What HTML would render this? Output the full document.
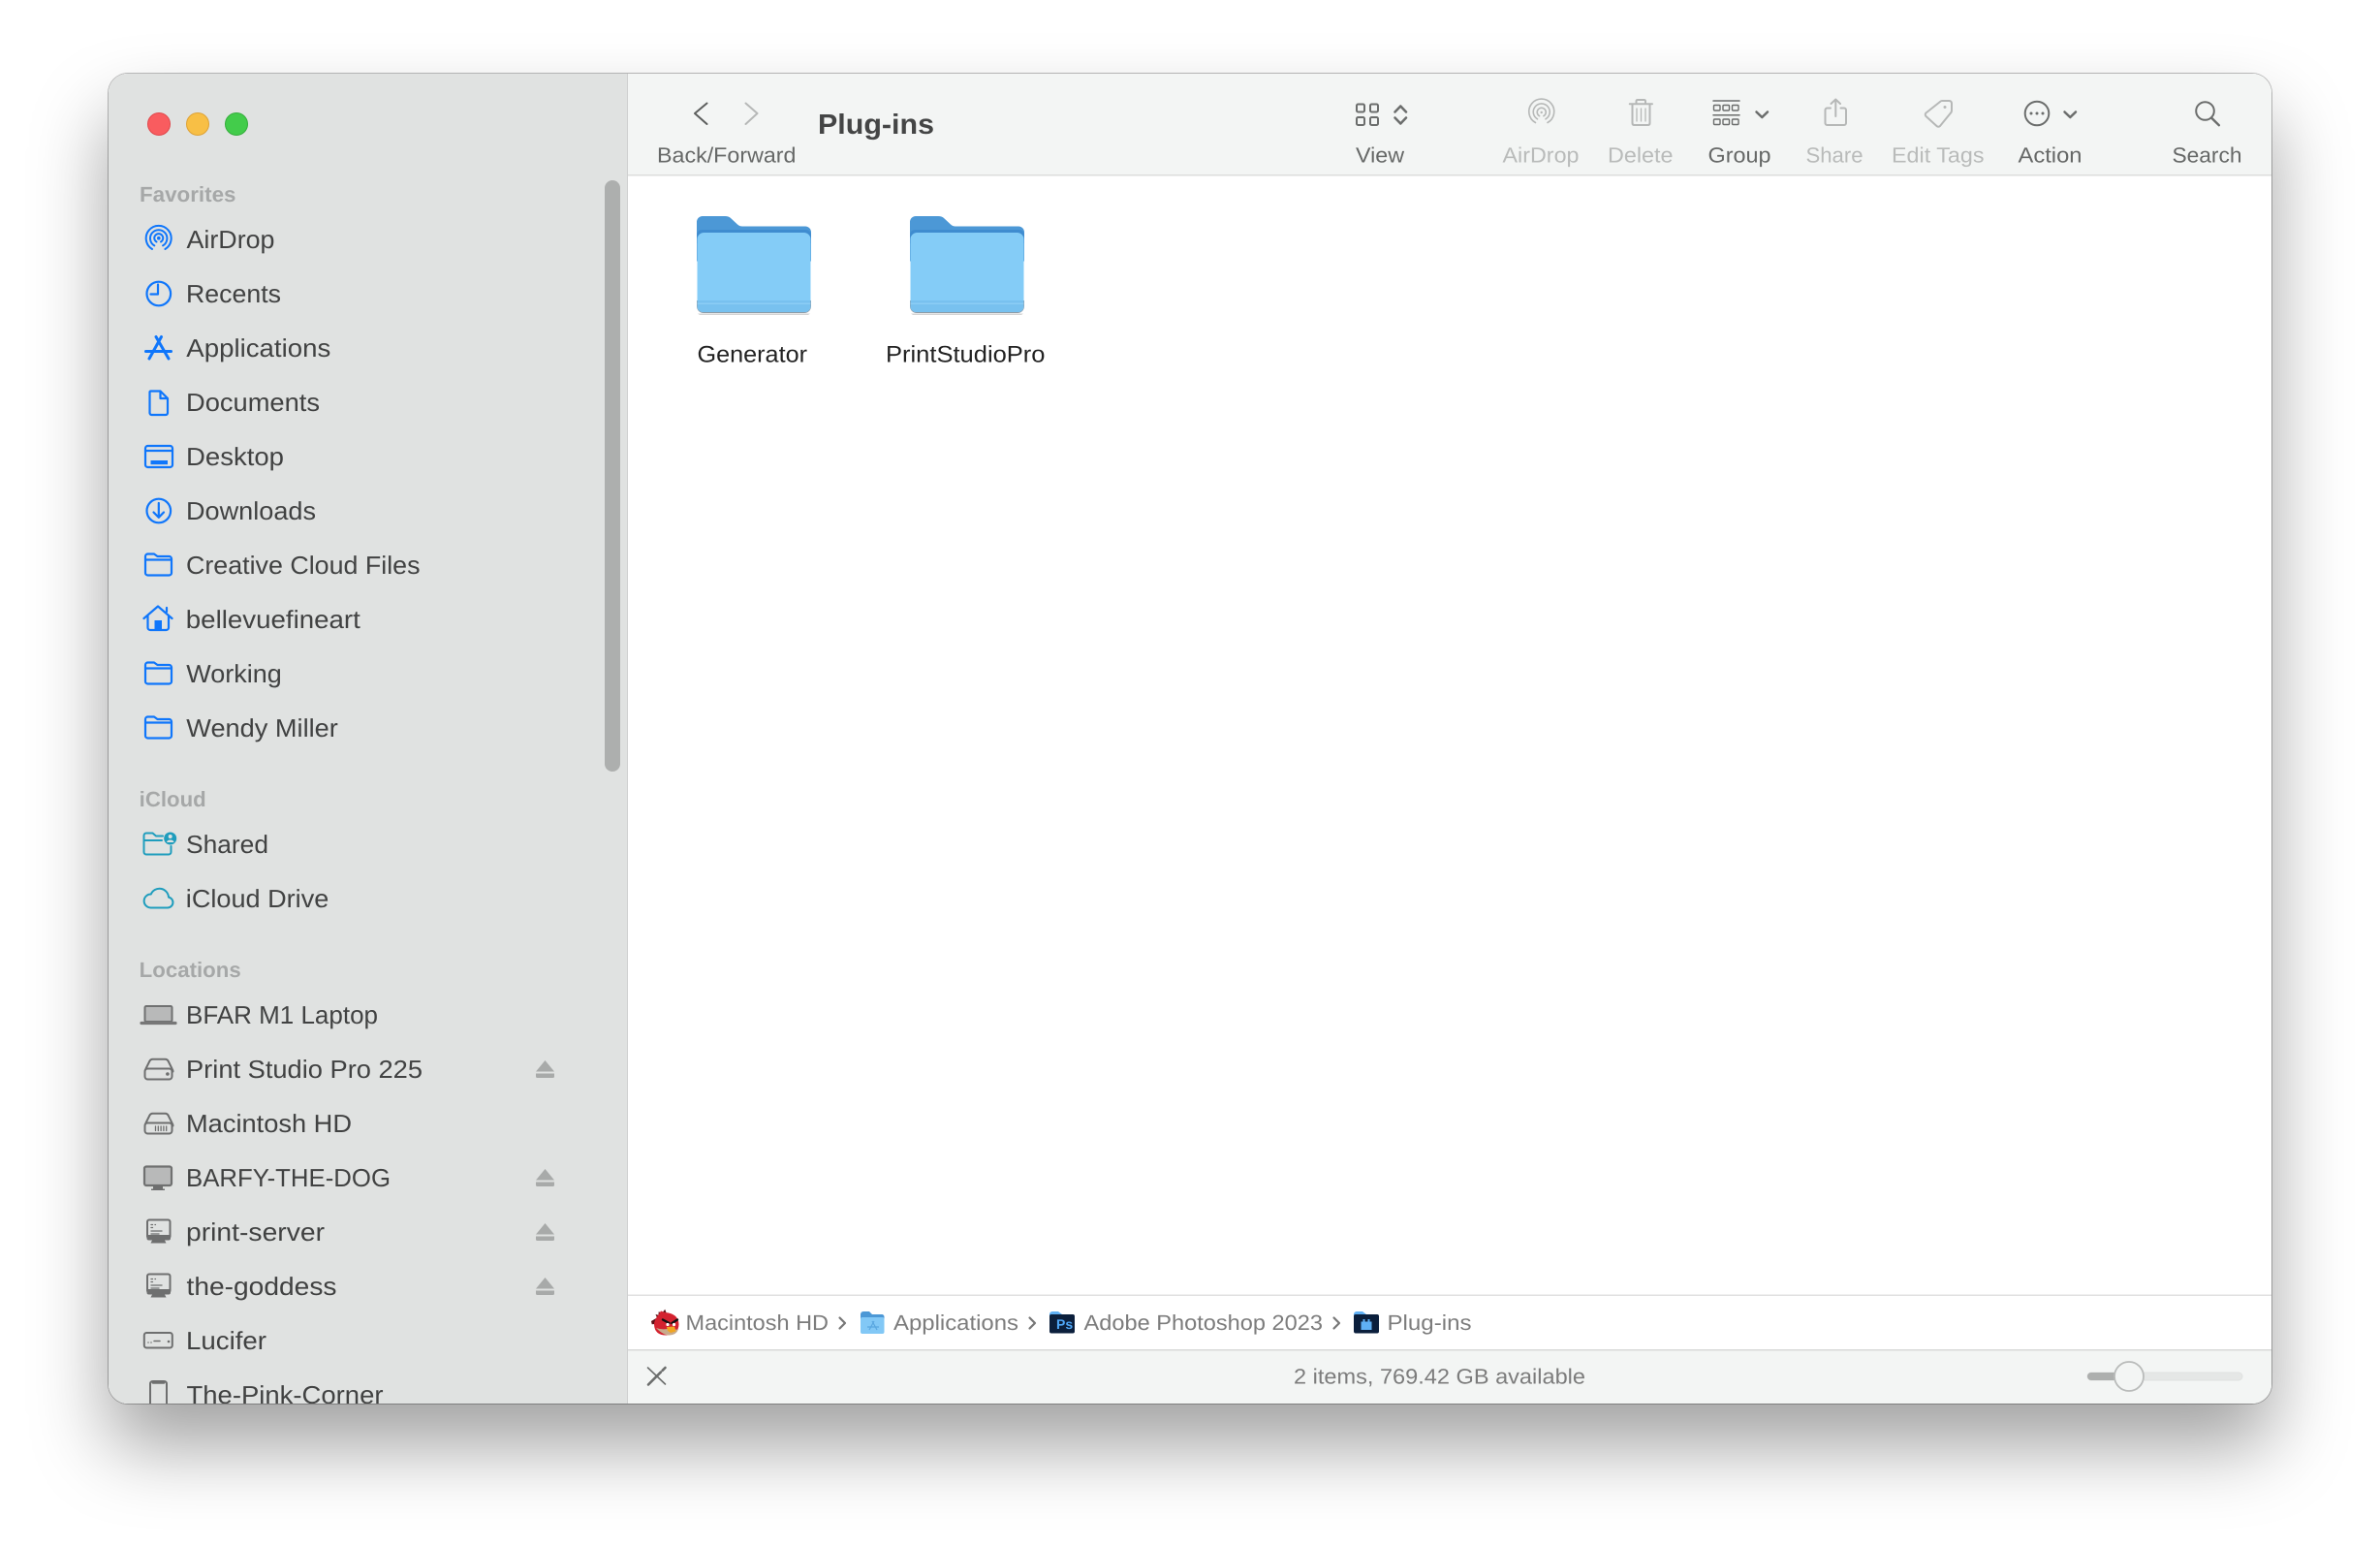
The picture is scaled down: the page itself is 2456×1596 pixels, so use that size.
<!DOCTYPE html>
<html lang="en"><head><meta charset="utf-8"><title>Plug-ins</title>
<style>
html,body{margin:0;padding:0;background:#fff;width:2456px;height:1596px;overflow:hidden}
#win{position:absolute;left:112px;top:76px;width:2232px;height:1372px;border-radius:20px;overflow:hidden;background:#fff}
#sh{position:absolute;left:112px;top:76px;width:2232px;height:1372px;border-radius:20px;box-shadow:0 44px 78px rgba(0,0,0,.37),0 0 0 1px rgba(0,0,0,.26)}
svg{display:block}
text{font-family:"Liberation Sans",sans-serif;text-rendering:geometricPrecision}
.s{font-size:26px;fill:#414242}
.h{font-size:22px;font-weight:700;fill:#a6a8a8}
.t{font-size:22px;fill:#666867}
.d{font-size:22px;fill:#b9bbba}
.p{font-size:22px;fill:#7c7c7c}
.f{font-size:24px;fill:#222}
.b{fill:none;stroke:#0f76fb;stroke-width:2.2;stroke-linecap:round;stroke-linejoin:round}
.g{fill:none;stroke:#6e6f6f;stroke-width:2;stroke-linecap:round;stroke-linejoin:round}
.c{fill:none;stroke:#1f9dbd;stroke-width:2;stroke-linecap:round;stroke-linejoin:round}
.i{fill:none;stroke:#6b6d6c;stroke-width:2;stroke-linecap:round;stroke-linejoin:round}
.o{fill:none;stroke:#b6b8b7;stroke-width:2;stroke-linecap:round;stroke-linejoin:round}
</style></head><body>
<div id="sh"></div>
<div id="win">
<svg width="2232" height="1372" viewBox="112 76 2232 1372" xmlns="http://www.w3.org/2000/svg">
<defs>
<g id="fl"><path d="M150 574a2.500 2.500 0 0 1 2.500-2.500h6.500l3.500 2.500h12a2.500 2.500 0 0 1 2.500 2.500v14.500a2.500 2.500 0 0 1-2.500 2.500h-22a2.500 2.500 0 0 1-2.500-2.500zM150 577.500h27"/></g>
<g id="hd"><path d="M149.500 1105.500q0-1.500 1-3l4-8q1-1.800 3-1.800h13q2 0 3 1.800l4 8q1 1.500 1 3M152.500 1102.500h22a3 3 0 0 1 3 3v5a3 3 0 0 1-3 3h-22a3 3 0 0 1-3-3v-5a3 3 0 0 1 3-3z"/></g>
<g id="srv"><rect x="152" y="1258.500" width="23.500" height="19" rx="2"/><path d="M156 1263.500h1.500M156 1266.500h1.500M160 1263.500h.5M156 1270h11M156 1273h8" stroke-width="1.300"/><path d="M151.500 1274h24.500v3.500a2 2 0 0 1-2 2h-20.500a2 2 0 0 1-2-2z" fill="#6e6f6f" stroke="none"/><path d="M157 1279.500h13l1.500 3h-16z" fill="#6e6f6f" stroke="none"/></g>
<path id="ej" d="M562.500 1094l9.500 11.500h-19zM553 1107.500h19v3a1.500 1.500 0 0 1-1.500 1.500h-16a1.500 1.500 0 0 1-1.500-1.500z" fill="#a8aaa9"/>
<g id="bigf"><path d="M720 323.500h116l-2 1.500h-112z" fill="#aaa" opacity=".5"/><path d="M719 229a6 6 0 0 1 6-6h23q4 0 6 2l7 6.500q2 2 5 2h65a6 6 0 0 1 6 6v30h-118z" fill="#4c98d6"/><path d="M719 243q0-6 6-6h106q6 0 6 6v8h-118z" fill="#3f8cd0"/><path d="M719 316a7 7 0 0 0 7 7h104a7 7 0 0 0 7-7v-6h-118z" fill="#8d9ba6"/><path d="M719.500 247a7 7 0 0 1 7-7h103a7 7 0 0 1 7 7v69a6 6 0 0 1-6 6h-105a6 6 0 0 1-6-6z" fill="#84ccf7"/><path d="M719.500 310h117v6a6 6 0 0 1-6 6h-105a6 6 0 0 1-6-6z" fill="#78c1ef"/><path d="M719.500 312.500h117v1.500h-117z" fill="#8bcdf6"/></g>
</defs>

<!-- panels -->
<rect x="112" y="76" width="2232" height="1372" fill="#fff"/>
<rect x="112" y="76" width="535" height="1372" fill="#e0e2e1"/>
<rect x="647" y="76" width="1" height="1372" fill="#cfd0d0"/>
<rect x="648" y="76" width="1696" height="104" fill="#f3f5f4"/>
<rect x="648" y="180" width="1696" height="1.500" fill="#dcdddc"/>
<rect x="648" y="1335.500" width="1696" height="1.500" fill="#e0e0e0"/>
<rect x="648" y="1392" width="1696" height="56" fill="#f3f5f4"/>
<rect x="648" y="1392" width="1696" height="1.500" fill="#d8d9d8"/>

<!-- traffic lights -->
<circle cx="164" cy="128" r="11.500" fill="#f95c5f" stroke="#e0484c" stroke-width="1"/>
<circle cx="204" cy="128" r="11.500" fill="#f8bf45" stroke="#dea235" stroke-width="1"/>
<circle cx="244" cy="128" r="11.500" fill="#43cc4b" stroke="#35ae3c" stroke-width="1"/>

<!-- scrollbar -->
<rect x="624" y="186" width="16" height="610" rx="8" fill="#adafae"/>

<!-- sidebar headings -->
<text class="h" x="144" y="208" textLength="99.500" lengthAdjust="spacingAndGlyphs">Favorites</text>
<text class="h" x="143.700" y="832" textLength="69" lengthAdjust="spacingAndGlyphs">iCloud</text>
<text class="h" x="143.700" y="1008" textLength="105" lengthAdjust="spacingAndGlyphs">Locations</text>

<!-- sidebar text -->
<text class="s" x="192.500" y="256" textLength="91" lengthAdjust="spacingAndGlyphs">AirDrop</text>
<text class="s" x="192" y="312" textLength="98" lengthAdjust="spacingAndGlyphs">Recents</text>
<text class="s" x="192.300" y="368" textLength="149" lengthAdjust="spacingAndGlyphs">Applications</text>
<text class="s" x="192" y="424" textLength="138" lengthAdjust="spacingAndGlyphs">Documents</text>
<text class="s" x="192" y="480" textLength="101" lengthAdjust="spacingAndGlyphs">Desktop</text>
<text class="s" x="192" y="536" textLength="134" lengthAdjust="spacingAndGlyphs">Downloads</text>
<text class="s" x="192" y="592" textLength="241.500" lengthAdjust="spacingAndGlyphs">Creative Cloud Files</text>
<text class="s" x="191.800" y="648" textLength="180" lengthAdjust="spacingAndGlyphs">bellevuefineart</text>
<text class="s" x="192.300" y="704" textLength="98.500" lengthAdjust="spacingAndGlyphs">Working</text>
<text class="s" x="192.300" y="760" textLength="156.500" lengthAdjust="spacingAndGlyphs">Wendy Miller</text>
<text class="s" x="192" y="880" textLength="85" lengthAdjust="spacingAndGlyphs">Shared</text>
<text class="s" x="191.800" y="936" textLength="147.500" lengthAdjust="spacingAndGlyphs">iCloud Drive</text>
<text class="s" x="192" y="1056" textLength="198" lengthAdjust="spacingAndGlyphs">BFAR M1 Laptop</text>
<text class="s" x="192" y="1112" textLength="244" lengthAdjust="spacingAndGlyphs">Print Studio Pro 225</text>
<text class="s" x="192" y="1168" textLength="171" lengthAdjust="spacingAndGlyphs">Macintosh HD</text>
<text class="s" x="192" y="1224" textLength="211" lengthAdjust="spacingAndGlyphs">BARFY-THE-DOG</text>
<text class="s" x="192" y="1280" textLength="143" lengthAdjust="spacingAndGlyphs">print-server</text>
<text class="s" x="192.500" y="1336" textLength="155" lengthAdjust="spacingAndGlyphs">the-goddess</text>
<text class="s" x="192" y="1392" textLength="83" lengthAdjust="spacingAndGlyphs">Lucifer</text>
<text class="s" x="192.500" y="1448" textLength="203" lengthAdjust="spacingAndGlyphs">The-Pink-Corner</text>

<!-- sidebar blue icons -->
<g class="b">
<path d="M157 257a13 13 0 1 1 13.400 0M159.300 253.400a8.700 8.700 0 1 1 8.800 0M161.500 249.500a4.500 4.500 0 1 1 4.500 0" stroke-width="2"/>
<circle cx="163.800" cy="245.700" r="1.800" fill="#0f76fb" stroke="none"/>
<circle cx="163.800" cy="303" r="12.300"/><path d="M163 293.500V303.500H155.500"/>
<path d="M161 347.500L174 370M166.500 347.500L154 370M150.500 362.500H176.500" stroke-width="3"/>
<path d="M155.500 403.500H165.500L173 411V426a2 2 0 0 1-2 2H156.500a2 2 0 0 1-2-2V404.500a1 1 0 0 1 1-1zM165.500 403.500V411H173"/>
<rect x="150" y="460" width="28" height="22" rx="2.500"/><path d="M150 465H178"/><rect x="155.500" y="475" width="17.500" height="4.200" fill="#0f76fb" stroke="none"/>
<circle cx="163.800" cy="527" r="12.300"/><path d="M163.800 519V533.500M158.500 528.500L163.800 533.800L169 528.500"/>
<use href="#fl"/>
<use href="#fl" y="112"/>
<use href="#fl" y="168"/>
<path d="M148.500 638L163 625.500L177.500 638M172 631V627M152.500 635V647.500a2.500 2.500 0 0 0 2.500 2.500H171.500a2.500 2.500 0 0 0 2.500-2.500V635"/>
<rect x="159.500" y="640" width="7.500" height="10" fill="#0f76fb" stroke="none"/>
</g>

<!-- iCloud icons -->
<g class="c">
<path d="M168 881.500H151a2.500 2.500 0 0 1-2.500-2.500V862a2.500 2.500 0 0 1 2.500-2.500h6.500l3.500 3h7M148.500 867H167M176.500 873V879a2.500 2.500 0 0 1-2.500 2.500H168"/>
<path d="M155.500 936.500A7 7 0 0 1 155.800 922.500A9.500 9.500 0 0 1 174 925.600A5.500 5.500 0 0 1 173 936.500Z"/>
</g>
<circle cx="175.700" cy="865" r="6.500" fill="#1f9dbd"/><circle cx="175.700" cy="863" r="2" fill="#e0e2e1"/><path d="M172 869a3.800 3 0 0 1 7.500 0z" fill="#e0e2e1"/>

<!-- location icons -->
<g class="g">
<rect x="149.500" y="1038" width="28" height="16" rx="1.500" fill="#b8b9b9" stroke="#707171"/>
<path d="M146 1055.500H181" stroke-width="3.200" stroke="#777"/>
<use href="#hd"/><circle cx="172.900" cy="1108" r="1.800" fill="#6e6f6f" stroke="none"/>
<use href="#hd" y="56"/><path d="M160.500 1162v4.500M163.300 1162v4.500M166.100 1162v4.500M168.900 1162v4.500M171.700 1162v4.500" stroke-width="1.300"/>
<rect x="149" y="1203.500" width="28" height="19.500" rx="2" fill="#b8b9b9" stroke="#707171" stroke-width="2.200"/>
<path d="M158 1223.500h10v3h2v1.500h-14v-1.500h2z" fill="#6e6f6f" stroke="none"/>
<use href="#srv"/>
<use href="#srv" y="56"/>
<rect x="148.800" y="1375" width="29" height="15.500" rx="2.500"/>
<path d="M153 1385v-.01M156 1385v-.01M159 1383.500h6" stroke-width="1.500"/><circle cx="174" cy="1384" r="1.300" fill="#6e6f6f" stroke="none"/>
<path d="M155 1448V1428q0-3 3-3h11q3 0 3 3V1448"/><path d="M158 1426.500h11" stroke-width="2.500"/>
</g>
<use href="#ej"/><use href="#ej" y="112"/><use href="#ej" y="168"/><use href="#ej" y="224"/>

<!-- toolbar left -->
<path d="M729.500 106.500L717 117L729.500 128" fill="none" stroke="#5c5e5d" stroke-width="2" stroke-linecap="round" stroke-linejoin="round"/>
<path d="M769.500 106.500L781.500 117L769.500 128" fill="none" stroke="#b6b8b7" stroke-width="2" stroke-linecap="round" stroke-linejoin="round"/>
<text x="844" y="138" font-size="29" font-weight="700" fill="#444545" textLength="120" lengthAdjust="spacingAndGlyphs">Plug-ins</text>

<!-- toolbar labels -->
<text class="t" x="678" y="167.500" textLength="143.500" lengthAdjust="spacingAndGlyphs">Back/Forward</text>
<text class="t" x="1399" y="167.500" textLength="50" lengthAdjust="spacingAndGlyphs">View</text>
<text class="d" x="1550.500" y="167.500" textLength="79" lengthAdjust="spacingAndGlyphs">AirDrop</text>
<text class="d" x="1659" y="167.500" textLength="67.500" lengthAdjust="spacingAndGlyphs">Delete</text>
<text class="t" x="1762.500" y="167.500" textLength="65" lengthAdjust="spacingAndGlyphs">Group</text>
<text class="d" x="1863.500" y="167.500" textLength="59" lengthAdjust="spacingAndGlyphs">Share</text>
<text class="d" x="1952" y="167.500" textLength="95.500" lengthAdjust="spacingAndGlyphs">Edit Tags</text>
<text class="t" x="2082.500" y="167.500" textLength="66" lengthAdjust="spacingAndGlyphs">Action</text>
<text class="t" x="2241.500" y="167.500" textLength="72" lengthAdjust="spacingAndGlyphs">Search</text>

<!-- toolbar icons -->
<g class="i">
<rect x="1400" y="107.500" width="8" height="8" rx="1.500"/><rect x="1414" y="107.500" width="8" height="8" rx="1.500"/><rect x="1400" y="121" width="8" height="8" rx="1.500"/><rect x="1414" y="121" width="8" height="8" rx="1.500"/>
<path d="M1439.500 115.500L1445.300 109.500L1451 115.500M1439.500 121.500L1445.300 127.500L1451 121.500" stroke-width="2.500"/>
<path d="M1768 104H1795M1768 118.700H1795" stroke-width="1.500"/>
<g stroke-width="1.400"><rect x="1768.500" y="108.500" width="6.500" height="5.500" rx="1"/><rect x="1778" y="108.500" width="6.500" height="5.500" rx="1"/><rect x="1787.500" y="108.500" width="6.500" height="5.500" rx="1"/><rect x="1768.500" y="123" width="6.500" height="5.500" rx="1"/><rect x="1778" y="123" width="6.500" height="5.500" rx="1"/><rect x="1787.500" y="123" width="6.500" height="5.500" rx="1"/></g>
<path d="M1812.500 115.500L1818.300 121L1824 115.500" stroke-width="2.500"/>
<circle cx="2102" cy="117" r="12.300"/>
<circle cx="2096" cy="117" r=".8" stroke-width="1.400"/><circle cx="2102" cy="117" r=".8" stroke-width="1.400"/><circle cx="2108" cy="117" r=".8" stroke-width="1.400"/>
<path d="M2130.500 115.500L2136.300 121L2142 115.500" stroke-width="2.500"/>
<circle cx="2275.500" cy="114.500" r="9.300"/><path d="M2282 121.500L2289.800 129.200" stroke-width="2.400"/>
</g>
<g class="o">
<path d="M1584.500 126.500a13 13 0 1 1 12.500 0M1586.500 122.800a8.500 8.500 0 1 1 8.500 0M1588.600 119.700a4.500 4.500 0 1 1 4.300 0" stroke-width="1.600"/>
<circle cx="1590.700" cy="116" r="1.200" fill="#b6b8b7" stroke="none"/>
<path d="M1681.700 107.300H1705M1688.500 107V104.500q0-1.500 1.500-1.500h6.500q1.500 0 1.500 1.500V107M1684.500 108V127q0 2 2 2H1700.500q2 0 2-2V108"/>
<path d="M1689 112V125M1693.500 112V125M1698 112V125" stroke-width="1.300"/>
<path d="M1889 111.500H1885.500a2 2 0 0 0-2 2V127a2 2 0 0 0 2 2H1903a2 2 0 0 0 2-2V113.500a2 2 0 0 0-2-2H1899.500M1894.300 120V102.500M1889.500 107L1894.300 102.500L1899 107"/>
<path d="M2004 104H2011.500a2.500 2.500 0 0 1 2.500 2.500V114q0 1.500-1 2.500L2002 130a2.500 2.500 0 0 1-3.500 0L1987.500 120a2.500 2.500 0 0 1 0-3.500L2002 105q1-1 2-1z"/>
<circle cx="2007" cy="110.500" r="1.500" fill="#b6b8b7" stroke="none"/>
</g>

<!-- big folders -->
<use href="#bigf"/>
<use href="#bigf" x="220"/>
<text class="f" x="719.500" y="373.500" textLength="113.500" lengthAdjust="spacingAndGlyphs">Generator</text>
<text class="f" x="914" y="373.500" textLength="164.500" lengthAdjust="spacingAndGlyphs">PrintStudioPro</text>

<!-- path bar -->
<g>
<path d="M672 1363l6-3.500-1.500-3.500 3 .8.2-3.500 3.500 1.500 3-4 1.500 4 6 2.500-8 8-13 1z" fill="#5a1116"/>
<path d="M682 1352.500l4 1.500q14 1 14.500 12q0 11-13 11.500q-12 0-12.500-11q0-4 3-8z" fill="#d3222f"/>
<path d="M677 1370q8 8 14 7.500q7-.5 9-6q-4 .5-9-1q-7 2-14-.5z" fill="#c9ab8c"/>
<path d="M684 1361.500l6.500 3.500M699 1361.500l-5.500 3.500" stroke="#111" stroke-width="2.400" stroke-linecap="round"/>
<circle cx="689" cy="1366.500" r="1.600" fill="#fff"/><circle cx="695.500" cy="1366.500" r="1.600" fill="#fff"/>
<path d="M688 1369l8-.5 1.500 5-5.500 1.500-3-2z" fill="#f1a520"/>
</g>
<text class="p" x="707.500" y="1372" textLength="147.500" lengthAdjust="spacingAndGlyphs">Macintosh HD</text>
<path d="M866.500 1359.500L872 1365L866.500 1370.500" fill="none" stroke="#777" stroke-width="2.200" stroke-linecap="round" stroke-linejoin="round"/>
<path d="M888 1356a3 3 0 0 1 3-3h6l3 3h10a2.500 2.500 0 0 1 2.500 2.500v4h-24.500z" fill="#4c98d6"/>
<path d="M888 1361a2 2 0 0 1 2-2h20.500a2 2 0 0 1 2 2v13a2 2 0 0 1-2 2h-20.500a2 2 0 0 1-2-2z" fill="#82c8f6"/>
<path d="M897 1372l5-9M905 1372l-5-9M895 1369h12" stroke="#59a6e0" stroke-width="1.200" fill="none"/>
<text class="p" x="922" y="1372" textLength="129" lengthAdjust="spacingAndGlyphs">Applications</text>
<path d="M1062.500 1359.500L1068 1365L1062.500 1370.500" fill="none" stroke="#777" stroke-width="2.200" stroke-linecap="round" stroke-linejoin="round"/>
<path d="M1083 1356a3 3 0 0 1 3-3h6l4 3h10a3 3 0 0 1 3 3v3h-26z" fill="#5fb0f4"/>
<rect x="1083" y="1356" width="26" height="19.500" rx="2" fill="#0b1f3c"/>
<text x="1090" y="1371" font-size="14" font-weight="700" fill="#4ea6f6">Ps</text>
<text class="p" x="1118.500" y="1372" textLength="246.500" lengthAdjust="spacingAndGlyphs">Adobe Photoshop 2023</text>
<path d="M1376.500 1359.500L1382 1365L1376.500 1370.500" fill="none" stroke="#777" stroke-width="2.200" stroke-linecap="round" stroke-linejoin="round"/>
<path d="M1397 1356a3 3 0 0 1 3-3h6l4 3h10a3 3 0 0 1 3 3v3h-26z" fill="#5fb0f4"/>
<rect x="1397" y="1356" width="26" height="19.500" rx="2" fill="#0b1f3c"/>
<path d="M1404.500 1372v-8.500h2v-2.500h2v2.500h3v-2.500h2v2.500h2v8.500z" fill="#5fb0f4"/>
<text class="p" x="1431.500" y="1372" textLength="87" lengthAdjust="spacingAndGlyphs">Plug-ins</text>

<!-- status bar -->
<path d="M668.500 1411L686.500 1428" fill="none" stroke="#6b6d6c" stroke-width="1.600" stroke-linecap="round"/>
<path d="M686.500 1411L669 1428.500" fill="none" stroke="#6b6d6c" stroke-width="2.600" stroke-linecap="round" stroke-dasharray="4 2.500 20"/>
<text class="p" x="1335" y="1427.500" textLength="301" lengthAdjust="spacingAndGlyphs">2 items, 769.42 GB available</text>
<rect x="2154" y="1416" width="160" height="8" rx="4" fill="#e5e7e6" stroke="#dfe1e0" stroke-width="1"/>
<path d="M2158 1416h40v8h-40a4 4 0 0 1 0-8z" fill="#adafae"/>
<circle cx="2197" cy="1420" r="15" fill="#f3f5f4" stroke="#b9bbba" stroke-width="1.800"/>
</svg>
</div>
</body></html>
